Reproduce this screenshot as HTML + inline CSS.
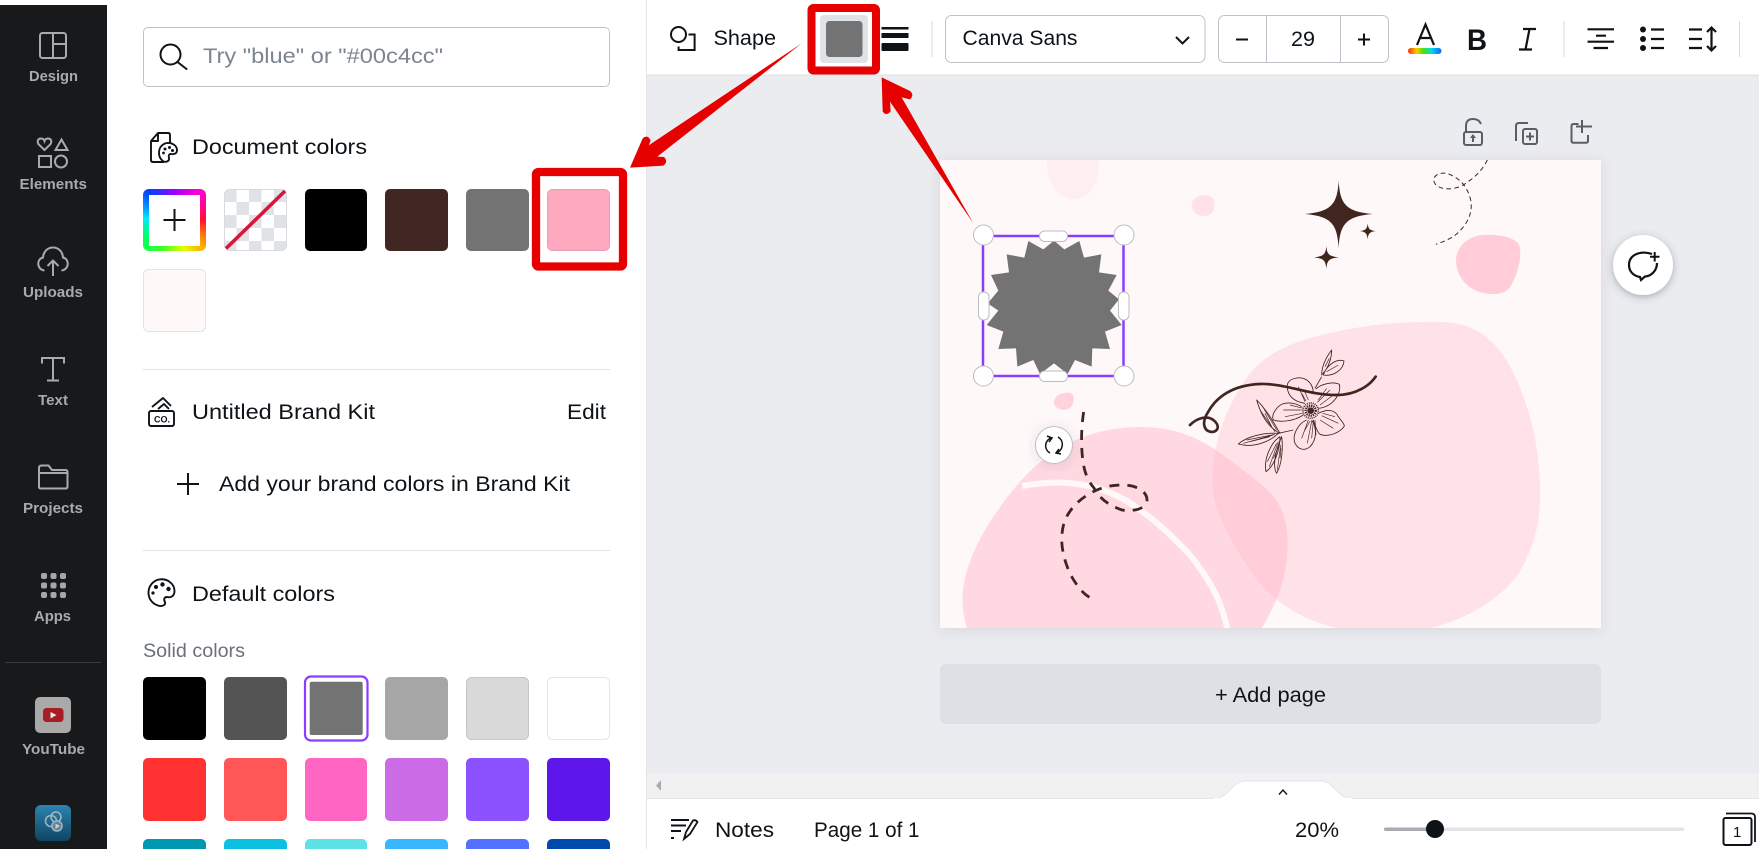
<!DOCTYPE html>
<html>
<head>
<meta charset="utf-8">
<style>
html,body{margin:0;padding:0;width:1759px;height:849px;overflow:hidden;background:#fff}
svg{position:absolute;left:0;top:0;display:block}
svg text{font-family:"Liberation Sans",sans-serif;fill:#0e1318;font-size:21.5px}
svg text.side{font-size:15px;font-weight:bold;fill:#a9aaac}
#rb{position:absolute;left:143px;top:189px;width:63px;height:62px;border-radius:6px;background:conic-gradient(from 0deg,#a000ff,#ff00d0 12%,#ff1030 25%,#ffa000 36%,#e8ff00 45%,#40ff20 56%,#00ff60 66%,#00e8ff 76%,#0040ff 88%,#a000ff)}
#rb div{position:absolute;left:6px;top:6px;width:51px;height:51px;background:#fff}
</style>
</head>
<body>
<svg width="1759" height="849" viewBox="0 0 1759 849" xmlns="http://www.w3.org/2000/svg">
<defs>
<pattern id="chk" x="224" y="189" width="25" height="26" patternUnits="userSpaceOnUse">
<rect width="25" height="26" fill="#fff"/><rect width="12.5" height="13" fill="#e0e3e6"/><rect x="12.5" y="13" width="12.5" height="13" fill="#e0e3e6"/>
</pattern>
<clipPath id="pg"><rect x="940" y="160" width="661" height="468"/></clipPath>
<filter id="sh" x="-20%" y="-20%" width="140%" height="140%"><feDropShadow dx="0" dy="2" stdDeviation="6" flood-color="#404858" flood-opacity=".13"/></filter>
<filter id="sh2" x="-40%" y="-40%" width="180%" height="180%"><feDropShadow dx="0" dy="2" stdDeviation="4" flood-color="#404858" flood-opacity=".4"/></filter>
<linearGradient id="rain" x1="0" x2="1" y1="0" y2="0"><stop offset="0" stop-color="#ff2a00"/><stop offset=".25" stop-color="#ffc800"/><stop offset=".45" stop-color="#50e000"/><stop offset=".7" stop-color="#00d8f0"/><stop offset="1" stop-color="#1060ff"/></linearGradient>
<linearGradient id="app" x1="0" x2="0" y1="0" y2="1"><stop offset="0" stop-color="#2b84b0"/><stop offset="1" stop-color="#0e4562"/></linearGradient>
</defs>

<!-- sidebar -->
<rect x="0" y="5" width="107" height="844" fill="#18191b"/>
<g fill="none" stroke="#a9aaac" stroke-width="2">
<rect x="40" y="33" width="26" height="25" rx="2.5"/><path d="M53 33V58M53 44H66"/>
<path d="M44.5 150L38.8 144.5C36.5 141.5 38 138.5 41 138.5C43 138.5 44 139.5 44.5 141C45 139.5 46 138.5 48 138.5C51 138.5 52.5 141.5 50.2 144.5Z"/>
<path d="M61.5 139.5L67.5 150H55.5Z"/>
<rect x="39" y="156" width="12" height="11"/><circle cx="61" cy="161.500" r="6"/>
<path d="M44.5 270.5C37 270 36 259 43 257.5C43.5 251 48 247.5 53 247.5C58 247.5 62.5 251 63 257.5C70 259 69 270 61.5 270.5"/>
<path d="M53 276V261M47.5 266L53 260.5L58.5 266"/>
<path d="M42 363.5V358H64V363.5M53 358V380.5M47 380.5H59"/>
<path d="M39 487V468Q39 465.5 41.5 465.5H48.5L52 470H65.5Q67.5 470 67.5 472V486.5Q67.5 488.5 65.5 488.5H41Q39 488.5 39 487ZM39 473H67.5" stroke-linejoin="round"/>
</g>
<g fill="#a5a6a8">
<rect x="41" y="573" width="6" height="6" rx="2"/><rect x="50.5" y="573" width="6" height="6" rx="2"/><rect x="60" y="573" width="6" height="6" rx="2"/>
<rect x="41" y="582.5" width="6" height="6" rx="2"/><rect x="50.5" y="582.5" width="6" height="6" rx="2"/><rect x="60" y="582.5" width="6" height="6" rx="2"/>
<rect x="41" y="592" width="6" height="6" rx="2"/><rect x="50.5" y="592" width="6" height="6" rx="2"/><rect x="60" y="592" width="6" height="6" rx="2"/>
</g>
<text class="side" x="29" y="81" textLength="49" lengthAdjust="spacingAndGlyphs">Design</text>
<text class="side" x="19.5" y="189" textLength="67.5" lengthAdjust="spacingAndGlyphs">Elements</text>
<text class="side" x="23" y="297" textLength="60" lengthAdjust="spacingAndGlyphs">Uploads</text>
<text class="side" x="38" y="405" textLength="30" lengthAdjust="spacingAndGlyphs">Text</text>
<text class="side" x="23" y="513" textLength="60" lengthAdjust="spacingAndGlyphs">Projects</text>
<text class="side" x="34" y="621" textLength="37" lengthAdjust="spacingAndGlyphs">Apps</text>
<rect x="5" y="662" width="96" height="1" fill="#38393b"/>
<rect x="35" y="697" width="36" height="36" rx="5" fill="#a9a9a9"/>
<rect x="43" y="708" width="20.5" height="14" rx="3.5" fill="#a81c24"/>
<path d="M50.5 712L56.5 715L50.5 718.5Z" fill="#e8e8e8"/>
<text class="side" x="22" y="754" textLength="63" lengthAdjust="spacingAndGlyphs">YouTube</text>
<rect x="35" y="805" width="36" height="36" rx="6" fill="url(#app)"/>
<g fill="none" stroke="#9fb4c0" stroke-width="1.6"><circle cx="51" cy="821" r="5.5"/><circle cx="56" cy="817" r="5"/><circle cx="57" cy="826" r="5" fill="#5e8399"/></g>
<path d="M55.5 823.5L60 826L55.5 829Z" fill="#c8d0d5"/>

<!-- panel -->
<rect x="646" y="0" width="1" height="849" fill="#e3e5e8"/>
<rect x="143.5" y="27.5" width="466" height="59" rx="4.5" fill="#fff" stroke="#bfc3c9"/>
<g fill="none" stroke="#0e1318" stroke-width="2"><circle cx="170.5" cy="54.5" r="10"/><path d="M177.5 62L186.5 69" stroke-linecap="round"/></g>
<text x="203" y="63" textLength="240" lengthAdjust="spacingAndGlyphs" style="fill:#7d8590">Try "blue" or "#00c4cc"</text>

<g fill="none" stroke="#0e1318" stroke-width="1.900" stroke-linejoin="round">
<path d="M170 143V135Q170 133 168 133H158L151 141V160Q151 162 153 162H164M158 133V141H151"/>
<path d="M163.5 161.5C157 157 157.5 146.5 165 143.5C172 141.5 177 146 177 150C177 154 173.5 154.5 171 154C168.5 154 168.5 156 169 158C169.5 161 166.5 162.5 163.5 161.5Z" fill="#fff"/>
</g>
<g fill="#0e1318"><circle cx="165" cy="149" r="1.5"/><circle cx="169.5" cy="147.5" r="1.5"/><circle cx="172.5" cy="150.5" r="1.5"/><circle cx="163.5" cy="153" r="1.4"/></g>
<text x="192" y="154" textLength="175" lengthAdjust="spacingAndGlyphs">Document colors</text>

<!-- doc swatches -->
<rect x="224.5" y="189.5" width="62" height="61" rx="5" fill="url(#chk)" stroke="#d8dade"/>
<path d="M226 248.500L285 191" stroke="#d8153c" stroke-width="3.600"/>
<rect x="305" y="189" width="62" height="62" rx="5" fill="#000"/>
<rect x="385" y="189" width="63" height="62" rx="5" fill="#402723"/>
<rect x="466" y="189" width="63" height="62" rx="5" fill="#737373"/>
<rect x="547.5" y="189.5" width="62" height="61" rx="5" fill="#ffa9c0" stroke="#ec9db2"/>
<rect x="143.5" y="269.5" width="62" height="62" rx="5" fill="#fff8f8" stroke="#e5e3e3"/>
<rect x="536" y="172" width="87" height="94.5" rx="2.5" fill="none" stroke="#e60000" stroke-width="8.300"/>

<rect x="143" y="369" width="467" height="1" fill="#e0e2e6"/>
<g fill="none" stroke="#0e1318" stroke-width="1.900" stroke-linejoin="round">
<rect x="149" y="411" width="25" height="15" rx="2"/>
<path d="M152 407L163 398L171 406M158 409L164 404L169 409"/>
</g>
<text x="154" y="422.5" style="font-size:9px;font-weight:bold">CO.</text>
<text x="192" y="419" textLength="183" lengthAdjust="spacingAndGlyphs">Untitled Brand Kit</text>
<text x="567" y="419" textLength="39" lengthAdjust="spacingAndGlyphs">Edit</text>
<path d="M177 484H199M188 473V495" stroke="#0e1318" stroke-width="2" fill="none"/>
<text x="219" y="491" textLength="351" lengthAdjust="spacingAndGlyphs">Add your brand colors in Brand Kit</text>
<rect x="143" y="550" width="467" height="1" fill="#e0e2e6"/>
<path d="M158 605.5C146 602 145 585 157 580C167 577 174.5 584 174.5 591C174.5 596 171 598 167 597C164 597 163.5 600 165 602C166 605 162 607 158 605.5Z" fill="none" stroke="#0e1318" stroke-width="1.900"/>
<g fill="#0e1318"><circle cx="156" cy="587" r="2"/><circle cx="162.5" cy="584.5" r="2.2"/><circle cx="168.5" cy="589" r="2.2"/><circle cx="153" cy="593" r="1.6"/></g>
<text x="192" y="601" textLength="143" lengthAdjust="spacingAndGlyphs">Default colors</text>
<text x="143" y="657" textLength="102" lengthAdjust="spacingAndGlyphs" style="font-size:19px;fill:#6b7079">Solid colors</text>

<!-- solid swatches -->
<rect x="143" y="677" width="63" height="63" rx="5" fill="#000"/>
<rect x="224" y="677" width="63" height="63" rx="5" fill="#545454"/>
<rect x="305" y="676.500" width="62.500" height="64" rx="6" fill="#fff" stroke="#8b3dff" stroke-width="2.200"/>
<rect x="309.700" y="681.700" width="53" height="53.300" rx="2" fill="#737373"/>
<rect x="385" y="677" width="63" height="63" rx="5" fill="#a6a6a6"/>
<rect x="466.500" y="677.500" width="62" height="62" rx="5" fill="#d9d9d9" stroke="#c4c6c8"/>
<rect x="547.500" y="677.500" width="62" height="62" rx="5" fill="#fff" stroke="#e3e5e8"/>
<rect x="143" y="758" width="63" height="63" rx="5" fill="#ff3131"/>
<rect x="224" y="758" width="63" height="63" rx="5" fill="#ff5757"/>
<rect x="305" y="758" width="62" height="63" rx="5" fill="#ff66c4"/>
<rect x="385" y="758" width="63" height="63" rx="5" fill="#cb6ce6"/>
<rect x="466" y="758" width="63" height="63" rx="5" fill="#8c52ff"/>
<rect x="547" y="758" width="63" height="63" rx="5" fill="#5e17eb"/>
<rect x="143" y="839" width="63" height="30" rx="5" fill="#0097b2"/>
<rect x="224" y="839" width="63" height="30" rx="5" fill="#0cc0df"/>
<rect x="305" y="839" width="62" height="30" rx="5" fill="#5ce1e6"/>
<rect x="385" y="839" width="63" height="30" rx="5" fill="#38b6ff"/>
<rect x="466" y="839" width="63" height="30" rx="5" fill="#5271ff"/>
<rect x="547" y="839" width="63" height="30" rx="5" fill="#004aad"/>

<!-- canvas area -->
<rect x="647" y="75" width="1112" height="698" fill="#ebecf0"/>
<rect x="647" y="74.500" width="1112" height="1" fill="#dfe1e5"/>

<!-- toolbar -->
<g fill="none" stroke="#0e1318" stroke-width="2">
<circle cx="678.500" cy="34.500" r="7.500"/><path d="M688.500 34.500H694.600V50H678.600V46.500"/>
</g>
<text x="713.500" y="45" textLength="62.500" lengthAdjust="spacingAndGlyphs">Shape</text>
<rect x="820" y="15" width="48" height="48" rx="4" fill="#e0e3e6"/>
<rect x="826" y="21" width="36.500" height="36" rx="3.500" fill="#737373"/>
<rect x="811.500" y="8" width="64.500" height="62.500" rx="2" fill="none" stroke="#e60000" stroke-width="8"/>
<rect x="881.500" y="27" width="27" height="2.500" fill="#0e1318"/><rect x="881.500" y="33" width="27" height="5" fill="#0e1318"/><rect x="881.500" y="43" width="27" height="8" rx="1" fill="#0e1318"/>
<rect x="931.500" y="21" width="1" height="36" fill="#d6d9dd"/>
<rect x="945.500" y="15.500" width="259.500" height="47" rx="6" fill="#fff" stroke="#bfc3c9"/>
<text x="962.500" y="45" textLength="115" lengthAdjust="spacingAndGlyphs">Canva Sans</text>
<path d="M1176 37L1182.500 43.500L1189 37" fill="none" stroke="#0e1318" stroke-width="2"/>
<rect x="1218.500" y="15.500" width="170" height="47" rx="6" fill="#fff" stroke="#bfc3c9"/>
<path d="M1266.500 15.500V62.500M1340.500 15.500V62.500" stroke="#bfc3c9"/>
<path d="M1236 39.500H1248M1358 39.500H1370M1364 33.500V45.500" stroke="#0e1318" stroke-width="2" fill="none"/>
<text x="1291" y="46" textLength="24" lengthAdjust="spacingAndGlyphs">29</text>
<path d="M1417 45L1425.500 24.500L1434 45M1420 38H1431" fill="none" stroke="#0e1318" stroke-width="2.200"/>
<rect x="1408" y="48" width="33.500" height="6" rx="3" fill="url(#rain)"/>
<text x="1467" y="50" textLength="20" lengthAdjust="spacingAndGlyphs" style="font-size:30px;font-weight:bold">B</text>
<path d="M1523 29H1536M1519 49.500H1532M1529.500 29L1525.500 49.500" fill="none" stroke="#0e1318" stroke-width="2.200"/>
<rect x="1563.500" y="21" width="1" height="36" fill="#d6d9dd"/>
<path d="M1587.500 29.300H1614M1596 35.700H1606M1587.500 41.700H1614M1593.500 48H1608" stroke="#0e1318" stroke-width="2.200" fill="none"/>
<g fill="#0e1318"><circle cx="1643" cy="29.500" r="3"/><circle cx="1643" cy="39" r="3"/><circle cx="1643" cy="48" r="3"/></g>
<path d="M1651 29.500H1664M1651 39H1664M1651 48H1664M1689 29.500H1702M1689 39H1702M1689 48H1702M1711.500 28V50M1707 32L1711.500 27.500L1716 32M1707 46L1711.500 50.500L1716 46" stroke="#0e1318" stroke-width="2.200" fill="none"/>
<rect x="1739" y="21" width="1" height="36" fill="#d6d9dd"/>

<!-- page tools -->
<g fill="none" stroke="#5a5f67" stroke-width="2" stroke-linejoin="round">
<rect x="1464" y="132" width="18" height="13" rx="2"/><path d="M1466 132V126Q1466 119 1473 119Q1479 119 1481 124"/><path d="M1473 136V142"/>
<path d="M1516 141V126Q1516 123 1519 123H1528"/><rect x="1523" y="129" width="14" height="15" rx="2"/><path d="M1530 132.500V140.500M1526 136.500H1534"/>
<path d="M1578.500 124H1573.500Q1571.500 124 1571.500 126V140.700Q1571.500 142.700 1573.500 142.700H1586Q1588 142.700 1588 140.700V135M1582 120V133M1576 126.500H1592"/>
</g>
<path d="M1473 134L1476 138H1470Z" fill="#5a5f67"/>

<!-- design page -->
<rect x="940" y="160" width="661" height="468" fill="#fff8f8" filter="url(#sh)"/>
<g clip-path="url(#pg)">
<g transform="translate(930,150) scale(.33333)">
<path d="M352 30C345 90 385 150 435 148C480 148 507 100 507 30Z" fill="#ffeef0"/>
<path d="M785 165C785 145 810 134 832 136C855 138 858 162 850 182C842 200 815 202 800 192C790 185 785 175 785 165Z" fill="#ffe1e7"/>
<path d="M372 757C372 738 395 726 418 728C435 730 433 755 425 768C415 782 395 782 385 775C376 770 372 765 372 757Z" fill="#ffd2dc"/>
</g>
<path d="M967 628C958 600 962 570 985 530C1000 505 1020 478 1045 458C1075 435 1110 427 1140 427C1175 427 1195 437 1216 450C1240 468 1262 483 1274 497C1290 518 1288 545 1287 560C1283 590 1272 610 1262 628Z" fill="#ffd8e1"/>
<path d="M1022 486C1060 479 1090 484 1108 492C1135 502 1165 528 1190 555C1210 580 1225 605 1229 640" fill="none" stroke="#fff8f8" stroke-width="6"/>
<path d="M1212.600 483C1212 440 1228 405 1247 377C1268 349 1300 340 1330 333C1365 325 1400 321 1440 322C1470 322 1490 335 1505 358C1525 390 1540 440 1540 490C1541 520 1535 545 1519 573C1500 600 1465 620 1430 628L1338 628C1300 620 1270 600 1250 570C1230 540 1213 510 1212.600 483Z" fill="#ffb0c4" opacity=".3"/>
<g transform="translate(1180,150) scale(.33333)">
<path d="M828 335C826 295 860 258 910 255C950 253 1000 258 1018 285C1028 320 1012 375 990 412C970 436 930 436 895 425C855 410 830 375 828 335Z" fill="#ffccd8"/>
<path d="M476 92C480 160 495 185 578 192C495 199 480 225 476 295C472 225 457 199 375 192C457 185 472 160 476 92Z" fill="#40261f"/>
<path d="M563 220C565 236 568 241 587 243C568 246 565 251 563 268C561 251 558 246 540 243C558 241 561 236 563 220Z" fill="#40261f"/>
<path d="M439 288C441 312 446 319 476 322C446 325 441 332 439 357C437 332 432 325 402 322C432 319 437 312 439 288Z" fill="#40261f"/>
<path d="M922 30C905 65 880 85 850 105C835 115 790 125 768 105C750 85 770 65 800 70C830 80 860 100 872 150C880 190 860 225 830 252C810 268 790 275 768 283" fill="none" stroke="#40261f" stroke-width="3" stroke-dasharray="14 10"/>
<path d="M30 825C50 805 80 795 100 810C125 830 110 850 90 845C70 840 65 815 85 785C110 740 160 705 240 702C320 700 380 735 470 735C530 735 570 705 587 680" fill="none" stroke="#40261f" stroke-width="8" stroke-linecap="round"/>
</g>
<path d="M1083.600 412C1081 430 1081 447 1083 462C1085 475 1089 482 1094 488C1099 498 1108 505 1122 510C1135 512 1147 508 1147 500C1147 492 1138 485 1122 485C1105 485 1090 491 1077 503C1065 515 1062 525 1061.700 540C1062 555 1068 572 1075 582C1080 590 1085 595 1090.700 598" fill="none" stroke="#40261f" stroke-width="2.800" stroke-dasharray="10 8"/>
<g transform="translate(1230,345) scale(.33333)" fill="none" stroke="#40261f" stroke-width="2.600" stroke-linejoin="round">
<path d="M225 175C190 170 170 150 172 120C175 100 210 92 230 105C245 115 250 130 250 145"/>
<path d="M258 132C270 118 310 108 328 118C335 145 310 185 265 190"/>
<path d="M215 185C190 170 160 170 145 185C130 200 125 215 130 225C150 232 190 230 220 210"/>
<path d="M230 225C205 235 185 270 195 295C205 315 225 318 240 305C260 285 262 250 245 225"/>
<path d="M265 205C295 190 315 195 325 215C340 235 345 240 342 245C330 262 295 278 270 268C260 260 255 240 250 225"/>
<path d="M80 165C90 200 110 245 150 265C130 230 110 195 80 165Z"/>
<path d="M25 297C50 275 100 262 145 265C120 290 70 310 25 297Z"/>
<path d="M150 275C125 290 100 340 108 380C130 365 150 320 150 275Z"/>
<path d="M155 275C160 310 155 360 140 385C125 360 140 310 155 275Z"/>
<path d="M145 265L190 255M305 15C290 35 275 60 275 90C295 70 305 40 305 15ZM280 90C290 60 320 40 342 48C340 75 310 95 280 90ZM275 95L255 130"/>
<path d="M90 195L135 260M105 205L125 245M95 180L140 255M40 295L130 270M60 290L120 275M50 285L135 268M118 365L145 290M130 340L148 300M112 350L140 295M142 375L152 300M150 340L153 310M215 195L160 195M218 205L165 215M220 190L180 180M225 170L205 125M235 165L222 135M228 168L215 145M262 172L300 135M270 180L310 150M265 165L290 130M275 212L325 235M270 225L310 250M278 205L315 215M235 225L215 280M245 228L232 295M240 228L222 260M255 225L258 270M250 228L245 280M285 65L298 40M290 80L325 60" stroke-width="2"/>
<circle cx="242" cy="197" r="10" fill="#40261f" stroke="none"/>
<circle cx="242" cy="197" r="15" stroke-width="7" stroke-dasharray="4 2.500"/>
<circle cx="242" cy="197" r="23" stroke-width="5" stroke-dasharray="3 3"/>
</g>
</g>

<!-- selection -->
<polygon fill="#737373" transform="translate(930,150) scale(.33333)" points="295,273 340,298 372,272 403,298 448,273 462,323 514,313 507,367 560,375 535,422 567,448 540,482 575,525 525,545 540,597 487,595 485,650 435,630 413,672 372,640 330,672 310,630 262,650 258,595 205,597 220,545 170,525 205,482 173,460 205,422 183,375 237,367 230,313 283,323"/>
<rect x="983" y="236" width="140.500" height="140" fill="none" stroke="#8b3dff" stroke-width="2.500"/>
<g fill="#fff" stroke="#bcbec4" stroke-width="1">
<circle cx="983.500" cy="235" r="10"/><circle cx="1124" cy="235" r="10"/><circle cx="983.500" cy="376" r="10"/><circle cx="1124" cy="376" r="10"/>
<rect x="1039.500" y="231" width="28" height="10.500" rx="5"/><rect x="1039.500" y="371" width="28" height="10.500" rx="5"/>
<rect x="978.500" y="292" width="10.500" height="28" rx="5"/><rect x="1118.500" y="292" width="10.500" height="28" rx="5"/>
</g>
<circle cx="1054" cy="445" r="18.500" fill="#fff" stroke="#bcbec4" filter="url(#sh)"/>
<g fill="none" stroke="#0e1318" stroke-width="1.500">
<path d="M1052 438C1045 439 1043 449 1050 453"/>
<path d="M1056 453C1063 451 1065 441 1058 437"/>
<path d="M1047 436L1052 438L1049 442M1061 454L1056 453L1059 449"/>
</g>

<!-- comment -->
<circle cx="1643" cy="265" r="30" fill="#fff" filter="url(#sh2)"/>
<path d="M1652 254C1640 250 1629 255 1629 265C1629 272 1634 276 1640 277L1641 280L1645 276.500C1651 276 1657 271 1657 263" fill="none" stroke="#0e1318" stroke-width="2.200"/>
<path d="M1654.700 252V261.500M1650 256.700H1659.500" stroke="#0e1318" stroke-width="2" fill="none"/>

<!-- add page -->
<rect x="940" y="664" width="661" height="60" rx="6" fill="#dfe0e5"/>
<text x="1215" y="702" textLength="111" lengthAdjust="spacingAndGlyphs">+ Add page</text>

<!-- arrows -->
<path transform="translate(620,30) scale(.33333)" d="M545 40L86 346L92 332Q84 312 68 325L30 413L130 407Q146 395 132 381L112 380Z" fill="#e60000"/>
<path transform="translate(860,60) scale(.33333)" d="M340 490L125 112L150 118Q164 105 150 93L65 52L68 154Q78 170 92 154L90 125Z" fill="#e60000"/>

<!-- bottom -->
<rect x="647" y="773" width="1112" height="25" fill="#f1f1f1"/>
<path d="M661 780L656 785.500L661 791Z" fill="#a8abb0"/>
<rect x="647" y="798" width="1112" height="51" fill="#fff"/>
<rect x="647" y="798" width="1112" height="1" fill="#e4e5e8"/>
<path d="M1214 799C1228 799 1232 781 1245 781H1321C1334 781 1338 799 1352 799Z" fill="#fff" stroke="#e4e5e8"/>
<rect x="1214" y="798" width="138" height="2.500" fill="#fff"/>
<path d="M1279 794.500L1283 790L1287 794.500" fill="none" stroke="#0e1318" stroke-width="1.400"/>
<path d="M671 820H689M671 825.500H686M671 831H681M671 838H674" stroke="#0e1318" stroke-width="2" fill="none"/>
<path d="M684 839L686 832L693 820.500Q695.500 819.500 697.500 822L690 834Z" fill="none" stroke="#0e1318" stroke-width="1.800"/>
<text x="715" y="837" textLength="59" lengthAdjust="spacingAndGlyphs">Notes</text>
<text x="814" y="837" textLength="105.500" lengthAdjust="spacingAndGlyphs">Page 1 of 1</text>
<text x="1295" y="837" textLength="44" lengthAdjust="spacingAndGlyphs">20%</text>
<rect x="1384" y="827.500" width="51" height="3.500" rx="1.500" fill="#a8abb0"/>
<rect x="1435" y="827.500" width="249" height="3.500" rx="1.500" fill="#e2e4e8"/>
<circle cx="1435" cy="829" r="9" fill="#0e1318"/>
<rect x="1723.500" y="818" width="28" height="27" rx="2" fill="#fff" stroke="#0e1318" stroke-width="2"/>
<path d="M1726 813.500H1751Q1755 813.500 1755 817V842" fill="none" stroke="#0e1318" stroke-width="1.800"/>
<text x="1733" y="837" style="font-size:15px">1</text>
</svg>
<div id="rb"><div></div></div>
<svg width="1759" height="849" viewBox="0 0 1759 849" style="pointer-events:none"><path d="M163.500 220H185.500M174.500 209V231" stroke="#0e1318" stroke-width="2" fill="none"/></svg>
</body>
</html>
